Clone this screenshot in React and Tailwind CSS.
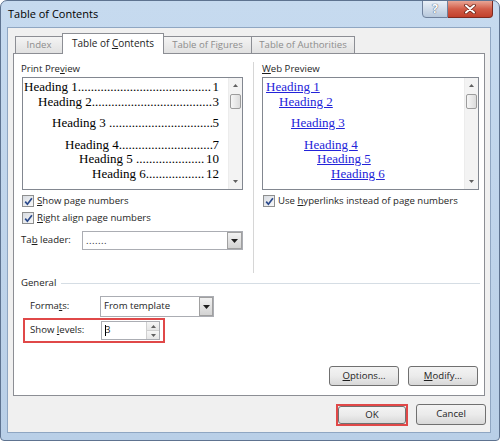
import React from "react";

function Tri() {
  return (
    <svg width="7" height="4" viewBox="0 0 7 4">
      <path d="M0 0 H7 L3.5 4 Z" fill="#1e1e1e" />
    </svg>
  );
}

function SmallTri({ down }) {
  return (
    <svg width="5" height="3" viewBox="0 0 5 3">
      {down ? <path d="M0 0 H5 L2.5 3 Z" fill="#606060" /> : <path d="M0 3 H5 L2.5 0 Z" fill="#606060" />}
    </svg>
  );
}

function Check() {
  return (
    <span className="w-[12px] h-[12px] shrink-0 border border-[#8e8f8f] bg-linear-to-br from-[#d8dce2] to-[#f8f8f8] flex items-center justify-center">
      <svg width="9" height="9" viewBox="0 0 9 9">
        <path d="M1.2 4.6 L3.4 7.2 L7.9 1.2" stroke="#2b4a8c" strokeWidth="1.7" fill="none" />
      </svg>
    </span>
  );
}

function ScrollBar() {
  return (
    <div className="w-[14px] h-full bg-[#f3f3f3] border-l border-[#ececec] flex flex-col items-center">
      <div className="h-[15px] flex items-center justify-center">
        <SmallTri down={false} />
      </div>
      <div className="mt-[1px] w-[11px] h-[15px] rounded-[2px] border border-[#9c9c9c] bg-linear-to-r from-[#f6f6f6] to-[#dcdcdc]" />
      <div className="flex-1" />
      <div className="h-[15px] flex items-center justify-center">
        <SmallTri down={true} />
      </div>
    </div>
  );
}

const rows = [
  { t: "Heading 1", n: "1", d: 41, cls: "h-[15px] leading-[15px] pl-[1px]" },
  { t: "Heading 2", n: "3", d: 37, cls: "h-[15px] leading-[15px] pl-[15px]" },
  { t: "Heading 3\u00a0", n: "5", d: 32, cls: "h-[15px] leading-[15px] pl-[29px] mt-[6px]" },
  { t: "Heading 4", n: "7", d: 29, cls: "h-[14px] leading-[14px] pl-[42px] mt-[8px]" },
  { t: "Heading 5\u00a0", n: "10", d: 21, cls: "h-[14px] leading-[14px] pl-[56px]" },
  { t: "Heading 6", n: "12", d: 18, cls: "h-[15px] leading-[15px] pl-[69px]" },
];

const webRows = [
  { t: "Heading 1", cls: "h-[15px] leading-[15px] pl-[3px]" },
  { t: "Heading 2", cls: "h-[15px] leading-[15px] pl-[16px]" },
  { t: "Heading 3", cls: "h-[15px] leading-[15px] pl-[28px] mt-[6px]" },
  { t: "Heading 4", cls: "h-[14px] leading-[14px] pl-[41px] mt-[8px]" },
  { t: "Heading 5", cls: "h-[14px] leading-[14px] pl-[54px]" },
  { t: "Heading 6", cls: "h-[15px] leading-[15px] pl-[68px]" },
];

function Button({ children, cls = "" }) {
  return (
    <div
      className={
        "flex items-center justify-center rounded-[3px] border border-[#707070] bg-linear-to-b from-[#f3f3f3] via-[#ebebeb] to-[#d8d8d8] text-[#1e1e1e] " +
        cls
      }
    >
      {children}
    </div>
  );
}

export default function App() {
  return (
    <div className="w-[500px] h-[441px] bg-linear-to-b from-[#c6daef] to-[#b9cfe7] border border-[#5e7390] rounded-t-[7px] rounded-b-[4px] flex flex-col font-['Open_Sans',sans-serif] text-[9.6px] text-[#1e1e1e] overflow-hidden">
      {/* Title bar */}
      <div className="h-[26px] flex items-start justify-between shrink-0">
        <div className="pl-[7px] pt-[5px] text-[11px] leading-[16px] text-black">Table of Contents</div>
        <div className="flex mr-[6px] -mt-px">
          <div className="w-[26px] h-[18px] border border-[#6f819c] rounded-bl-[4px] bg-linear-to-b from-[#eaf0f7] to-[#b7c8dc] flex items-center justify-center text-[12px] font-bold text-white [text-shadow:0_0_1px_#4a5a70,0_0_1px_#4a5a70]">
            ?
          </div>
          <div className="w-[45px] h-[18px] border border-[#7e2a20] border-l-0 rounded-br-[4px] bg-linear-to-b from-[#e8a595] via-[#d25d48] to-[#c2402c] flex items-center justify-center">
            <svg width="12" height="10" viewBox="0 0 12 10">
              <path d="M2 1.5 L10 8.5 M10 1.5 L2 8.5" stroke="#6a2418" strokeWidth="3.6" strokeLinecap="round" />
              <path d="M2 1.5 L10 8.5 M10 1.5 L2 8.5" stroke="#ffffff" strokeWidth="2" strokeLinecap="round" />
            </svg>
          </div>
        </div>
      </div>

      {/* Client area */}
      <div className="flex-1 ml-[6px] mr-[8px] mb-[7px] border border-[#8fa6c2] bg-[#f0f0f0] flex flex-col px-[5px] pt-[5px]">
        {/* Tabs */}
        <div className="h-[21px] -mb-px flex items-end pl-[2px] relative z-10 shrink-0">
          <div className="w-[48px] h-[17px] mb-px border border-b-0 border-[#8c8e94] bg-linear-to-b from-[#f4f4f4] to-[#e1e1e1] flex items-center justify-center text-[#8d8d8d]">
            <span>Index</span>
          </div>
          <div className="w-[102px] h-[21px] -ml-px border border-b-0 border-[#8c8e94] bg-white flex items-center justify-center pb-[1px] text-[10px]">
            <span>
              Table of <u>C</u>ontents
            </span>
          </div>
          <div className="w-[89px] h-[17px] mb-px -ml-px border border-b-0 border-[#8c8e94] bg-linear-to-b from-[#f4f4f4] to-[#e1e1e1] flex items-center justify-center text-[#8d8d8d]">
            <span>Table of Figures</span>
          </div>
          <div className="w-[104px] h-[17px] mb-px -ml-px border border-b-0 border-[#8c8e94] bg-linear-to-b from-[#f4f4f4] to-[#e1e1e1] flex items-center justify-center text-[#8d8d8d]">
            <span>Table of Authorities</span>
          </div>
        </div>

        {/* Panel */}
        <div className="h-[343px] shrink-0 border border-[#8c8e94] bg-white flex flex-col px-[7px] pt-[8px]">
          <div className="h-[211px] flex shrink-0">
            {/* Left column */}
            <div className="w-[222px] shrink-0 flex flex-col">
              <div className="h-[15px] leading-[14px]">
                Print Pre<u>v</u>iew
              </div>
              <div className="ml-px h-[113px] border border-[#828790] flex">
                <div className="flex-1 min-w-0 pt-[1px] pr-[9px] font-['Liberation_Serif',serif] text-[13px] text-black">
                  {rows.map((r) => (
                    <div key={r.t} className={"flex whitespace-nowrap " + r.cls}>
                      <span>{r.t}</span>
                      <span className="min-w-0 overflow-hidden">{".".repeat(r.d)}</span>
                      <span className="ml-auto">{r.n}</span>
                    </div>
                  ))}
                </div>
                <ScrollBar />
              </div>
              <div className="mt-[5px] h-[12px] flex items-center gap-[3px] ml-px">
                <Check />
                <span className="leading-[12px]">
                  <u>S</u>how page numbers
                </span>
              </div>
              <div className="mt-[5px] h-[12px] flex items-center gap-[3px] ml-px">
                <Check />
                <span className="leading-[12px]">
                  <u>R</u>ight align page numbers
                </span>
              </div>
              <div className="mt-[7px] h-[19px] flex items-center">
                <div className="w-[61px]">
                  Ta<u>b</u> leader:
                </div>
                <div className="flex-1 h-[19px] border border-[#abadb3] bg-white flex">
                  <div className="flex-1 pl-[3px] flex items-center leading-none tracking-[0.5px]">.......</div>
                  <div className="w-[15px] border border-[#a0a0a0] bg-linear-to-b from-[#f2f2f2] to-[#d3d3d3] flex items-center justify-center">
                    <Tri />
                  </div>
                </div>
              </div>
            </div>

            {/* Divider */}
            <div className="ml-[10px] w-px shrink-0 h-full bg-[#d6d6d6]" />

            {/* Right column */}
            <div className="ml-[8px] w-[217px] shrink-0 flex flex-col">
              <div className="h-[15px] leading-[14px]">
                <u>W</u>eb Preview
              </div>
              <div className="h-[113px] border border-[#828790] flex">
                <div className="flex-1 min-w-0 pt-[1px] font-['Liberation_Serif',serif] text-[13px] text-[#2323d9]">
                  {webRows.map((r) => (
                    <div key={r.t} className={"whitespace-nowrap " + r.cls}>
                      <span className="underline">{r.t}</span>
                    </div>
                  ))}
                </div>
                <ScrollBar />
              </div>
              <div className="mt-[5px] h-[12px] flex items-center gap-[3px] ml-px">
                <Check />
                <span className="leading-[12px]">
                  Use <u>h</u>yperlinks instead of page numbers
                </span>
              </div>
            </div>
          </div>

          {/* General */}
          <div className="mt-[3px] h-[14px] flex items-center gap-[5px]">
            <span className="leading-[14px]">General</span>
            <div className="flex-1 h-px bg-[#d5dde4] -mr-[3px]" />
          </div>
          <div className="mt-[6px] h-[21px] flex items-center pl-[9px]">
            <div className="w-[70px]">
              Forma<u>t</u>s:
            </div>
            <div className="w-[114px] h-[21px] border border-[#abadb3] bg-white flex">
              <div className="flex-1 pl-[3px] flex items-center">From template</div>
              <div className="w-[14px] border border-[#a0a0a0] bg-linear-to-b from-[#f2f2f2] to-[#d3d3d3] flex items-center justify-center">
                <Tri />
              </div>
            </div>
          </div>
          <div className="mt-[1px] ml-[2px] w-[142px] h-[25px] border-2 border-[#e04848] flex items-center pl-[5px]">
            <div className="w-[71px]">
              Show <u>l</u>evels:
            </div>
            <div className="w-[59px] h-[19px] border border-[#abadb3] bg-white flex">
              <div className="flex-1 flex items-center pl-[3px]">
                <span className="w-px h-[11px] bg-black" />
                <span className="-ml-[1px]">3</span>
              </div>
              <div className="w-[13px] flex flex-col border-l border-[#d0d0d0]">
                <div className="flex-1 flex items-center justify-center bg-linear-to-b from-[#f6f6f6] to-[#e6e6e6] border-b border-[#d0d0d0]">
                  <SmallTri down={false} />
                </div>
                <div className="flex-1 flex items-center justify-center bg-linear-to-b from-[#f6f6f6] to-[#e6e6e6]">
                  <SmallTri down={true} />
                </div>
              </div>
            </div>
          </div>

          <div className="flex-1" />
          <div className="flex justify-end gap-[9px] -mr-px pb-[9px]">
            <Button cls="w-[70px] h-[20px]">
              <span>
                <u>O</u>ptions...
              </span>
            </Button>
            <Button cls="w-[70px] h-[20px]">
              <span>
                <u>M</u>odify...
              </span>
            </Button>
          </div>
        </div>

        {/* Bottom buttons */}
        <div className="mt-[8px] flex justify-end items-start gap-[8px] -mr-px">
          <div className="w-[72px] h-[22px] border-2 border-[#e04848] flex">
            <Button cls="flex-1 border-[#3c7fb1]">OK</Button>
          </div>
          <Button cls="w-[70px] h-[21px]">Cancel</Button>
        </div>
      </div>
    </div>
  );
}
